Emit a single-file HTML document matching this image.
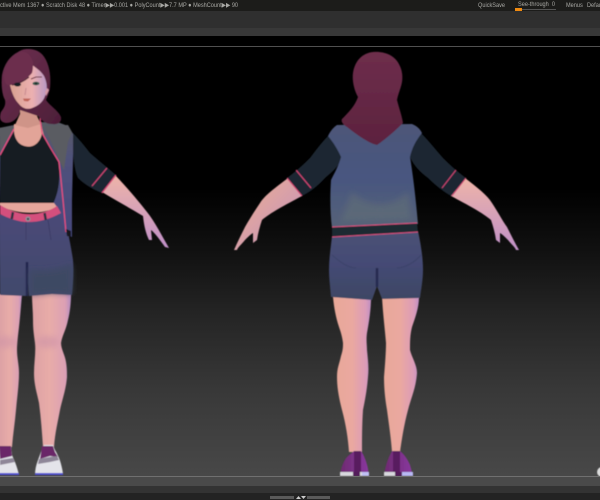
<!DOCTYPE html>
<html><head><meta charset="utf-8">
<style>
html,body{margin:0;padding:0;background:#000}
#w{position:relative;width:600px;height:500px;overflow:hidden;font-family:"Liberation Sans",sans-serif}
svg{position:absolute;left:0;top:0}
.t{position:absolute;top:2px;font-size:6.5px;line-height:8px;color:#a8a8a4;white-space:nowrap;transform-origin:0 0;transform:scaleX(.86);filter:blur(.3px)}
</style></head><body><div id="w">
<svg width="600" height="500" viewBox="0 0 600 500">
<defs>
<linearGradient id="bg" x1="0" y1="46" x2="0" y2="476" gradientUnits="userSpaceOnUse">
<stop offset="0" stop-color="#000"/><stop offset=".33" stop-color="#000"/><stop offset=".48" stop-color="#111"/><stop offset=".62" stop-color="#242424"/><stop offset=".8" stop-color="#383838"/><stop offset="1" stop-color="#484848"/></linearGradient>
<linearGradient id="skin" x1="0" y1="0" x2="1" y2="0"><stop offset="0" stop-color="#dca0a4"/><stop offset=".45" stop-color="#e8aca8"/><stop offset=".85" stop-color="#dca0b4"/><stop offset="1" stop-color="#b48cc0"/></linearGradient>
<linearGradient id="skinb" x1="0" y1="0" x2="1" y2="0"><stop offset="0" stop-color="#e8a898"/><stop offset=".5" stop-color="#eaa8a0"/><stop offset=".85" stop-color="#dc9cb8"/><stop offset="1" stop-color="#c090c4"/></linearGradient>
<linearGradient id="arm" x1="0" y1="0" x2="0" y2="1"><stop offset="0" stop-color="#eeb4a8"/><stop offset="1" stop-color="#c090c8"/></linearGradient>
<linearGradient id="armb" x1="0" y1="0" x2="1" y2="1"><stop offset="0" stop-color="#f0b090"/><stop offset="1" stop-color="#c090c0"/></linearGradient>
<linearGradient id="shorts" x1="0" y1="0" x2="0" y2="1"><stop offset="0" stop-color="#4a4a78"/><stop offset="1" stop-color="#42486c"/></linearGradient>
<linearGradient id="shortsb" x1="0" y1="0" x2="0" y2="1"><stop offset="0" stop-color="#4a5274"/><stop offset=".5" stop-color="#444a74"/><stop offset="1" stop-color="#3e4664"/></linearGradient>
<linearGradient id="jack" x1="0" y1="0" x2="0" y2="1"><stop offset="0" stop-color="#5a5c64"/><stop offset=".3" stop-color="#50527a"/><stop offset="1" stop-color="#46487e"/></linearGradient>
<linearGradient id="jackb" x1="0" y1="0" x2="0" y2="1"><stop offset="0" stop-color="#4e5678"/><stop offset=".5" stop-color="#485680"/><stop offset="1" stop-color="#566278"/></linearGradient>
<linearGradient id="sl" x1="0" y1="0" x2="1" y2="1"><stop offset="0" stop-color="#1e2632"/><stop offset="1" stop-color="#1a2630"/></linearGradient>
<linearGradient id="hair" x1="0" y1="0" x2="1" y2="1"><stop offset="0" stop-color="#6e3050"/><stop offset="1" stop-color="#4c1e38"/></linearGradient>
<linearGradient id="hairb" x1="0" y1="0" x2="0" y2="1"><stop offset="0" stop-color="#6e2e4c"/><stop offset="1" stop-color="#5c223e"/></linearGradient>
<linearGradient id="face" x1="0" y1="0" x2="1" y2="0"><stop offset="0" stop-color="#d8a090"/><stop offset=".6" stop-color="#ecb0b0"/><stop offset="1" stop-color="#b898c4"/></linearGradient>
<linearGradient id="shoe" x1="0" y1="0" x2="1" y2="0"><stop offset="0" stop-color="#6e2a70"/><stop offset="1" stop-color="#8a38a0"/></linearGradient>
<filter id="b" x="-5%" y="-5%" width="110%" height="110%"><feGaussianBlur stdDeviation=".5"/></filter>
<filter id="s" x="-40%" y="-40%" width="180%" height="180%"><feGaussianBlur stdDeviation="3"/></filter>
</defs>

<rect width="600" height="500" fill="#000"/>
<rect y="46" width="600" height="430" fill="url(#bg)"/>
<rect y="0" width="600" height="11" fill="#1c1c1a"/>
<rect y="11" width="600" height="17" fill="#2f2f2f"/>
<rect y="28" width="600" height="8" fill="#383838"/>
<rect y="46" width="600" height="1" fill="#505050"/>
<rect x="516" y="9" width="40" height="1" fill="#555"/>
<rect x="515" y="8" width="7" height="3" fill="#f08a10"/>

<g filter="url(#b)">
<!-- FRONT FIGURE -->
<path d="M-1 294H22C21 306 20 318 19 327 18 336 17 343 17 350 17 358 19 365 19 373 19 385 17 398 16 410 15 422 13 434 12 447H-1Z" fill="url(#skin)"/>
<path d="M32 294H71C71 303 70 312 68 320 66 330 62 336 61 343 61 349 65 355 66 362 67 368 67 372 67 377 66 390 62 400 60 410 58 421 55 433 54 447H43C42 433 41 418 39 403 37 393 34 385 34 373 34 363 36 352 35 343 34 335 33 330 33 320 33 312 32 303 32 294Z" fill="url(#skin)"/>
<ellipse cx="48" cy="342" rx="11" ry="6" fill="#c88ca8" opacity=".45" filter="url(#s)"/>
<ellipse cx="6" cy="342" rx="10" ry="6" fill="#c88ca8" opacity=".4" filter="url(#s)"/>
<!-- shoes -->
<path d="M42 449 44 445H53L55 450C58 455 60 460 61 464 62 468 63 472 63 475H35C35 470 36 465 38 460Z" fill="#e4e4ea"/>
<path d="M42 446H53L55 452 58 457 50 456 40 459Z" fill="#6a2668"/>
<path d="M39 459 50 457 57 456 59 460 50 462 38 464Z" fill="#8e8698"/>
<path d="M35 473H63V475H35Z" fill="#5050d0"/>
<path d="M-1 446H11L12 455 15 462C17 467 18 471 19 475H-1Z" fill="#e4e4ea"/>
<path d="M-1 446H11L12 456 0 459Z" fill="#6a2668"/>
<path d="M0 460 13 458 15 462 0 465Z" fill="#8e8698"/>
<path d="M-1 473H19V475H-1Z" fill="#5050d0"/>
<!-- shorts -->
<path d="M-1 214 20 220 40 220 62 210C66 222 70 240 73 260 74 272 73 284 72 295L52 294 29 296 27 270 26 296 0 295Z" fill="url(#shorts)"/>
<path d="M27 262V296" stroke="#24284e" stroke-width="2.500"/>
<path d="M30 270C44 272 60 270 72 264L72 294 52 293 30 295Z" fill="#3e4862" opacity=".8" filter="url(#s)"/>
<path d="M26 222V240M48 220 51 240" stroke="#3c3c68" stroke-width="1" fill="none"/>
<!-- arm -->
<path d="M115 175C125 185 140 203 147 212 155 222 162 236 169 248L165 247C160 240 155 233 151 230L152 240 149 240C146 234 144 226 143 216 130 208 115 200 102 192Z" fill="url(#arm)"/>
<!-- sleeve -->
<path d="M72 132C78 138 84 145 90 153 98 160 108 168 116 175L102 193C92 189 84 184 78 178 74 170 72 150 72 132Z" fill="url(#sl)"/>
<path d="M116 175 102 193" stroke="#d84878" stroke-width="1.300" fill="none"/>
<path d="M92 186 107 168" stroke="#d84878" stroke-width="1" fill="none"/>
<!-- jacket -->
<path d="M-1 128 14 125 40 122 60 123 68 126 73 134 73 160 72 200 72 237 66 234 56 206 0 204Z" fill="url(#jack)"/>
<path d="M44 126 68 125 72 132 68 142 64 170 59 160Z" fill="#5a5c62"/>
<path d="M-1 128 14 126 0 152Z" fill="#5a5c62"/>
<!-- chest skin -->
<path d="M14 124H41L44 136 40 148H14Z" fill="#e2a498"/>
<!-- neck -->
<path d="M20 100H36L37 116 41 124 28 128 15 125 20 114Z" fill="#cf9488"/>
<!-- tank -->
<path d="M0 156 14 131C15 141 20 146 28 146.500 36 147 41 140 42 133 48 143 55 152 59 163 60 175 60 190 53 204L30 203 0 203Z" fill="#161b21"/>
<!-- belly -->
<path d="M-1 203H54L57 207C45 214 20 216 0 206Z" fill="#e6a69c"/>
<!-- piping -->
<path d="M0 155 14 129" stroke="#e84f80" stroke-width="1.300" fill="none"/>
<path d="M40 118 42 133 50 147 59 162 61 180 63 200 66 232" stroke="#e84f80" stroke-width="1.200" fill="none"/>
<path d="M66 229 71 231 71 237 67 236Z" fill="#14181e"/>
<!-- belt -->
<path d="M0 205C10 211 20 214 30 214 40 214 50 211 57 206L61 213C50 219 40 222 28 222 18 222 8 218 0 214Z" fill="#d44f7d"/>
<rect x="11" y="212" width="2.500" height="7" fill="#2a3040" transform="rotate(10 12 216)"/>
<rect x="44" y="213" width="2.500" height="7" fill="#2a3040" transform="rotate(-10 45 217)"/>
<circle cx="28" cy="219" r="2.500" fill="#8a8f98"/>
<circle cx="28" cy="219" r="1" fill="#2a2a30"/>
<!-- hair back -->
<path d="M28 49C36 49 42 52 46 60 50 68 51 78 50 88 49 94 47 97 46 100 50 106 58 110 61 117 62 122 58 125 52 124 46 124 42 121 38 116L20 110C20 116 14 123 6 123 0 122-1 118 1 112 4 108 6 105 5 100 2 95 1 85 2 75 4 64 10 56 18 52 21 50 24 49 28 49Z" fill="url(#hair)"/>
<!-- face -->
<path d="M31 64C36 68 41 71 44 76 47 82 48 90 45 96 43 102 38 106 32 108 27 110 22 108 19 104 15 100 12 94 10 85 20 84 28 76 31 64Z" fill="url(#face)"/>
<!-- fringe -->
<path d="M33 62C30 53 25 50 18 53 10 58 4 68 4 78 5 84 7 86 10 85 18 84 27 79 32 73 33 70 33 66 33 62Z" fill="#6c2e4e"/>
<path d="M12 85C18 84 24 81 29 77" stroke="#4a1e34" stroke-width="1.200" fill="none"/>
<!-- face detail -->
<ellipse cx="17.500" cy="84.500" rx="3.500" ry="2" fill="#181e22"/>
<ellipse cx="36" cy="83.500" rx="3.500" ry="1.800" fill="#3a5a4e"/>
<circle cx="36" cy="83.500" r="1.100" fill="#1c2624"/>
<path d="M31 79 36 77 42 77" stroke="#6a3040" stroke-width="1" fill="none"/>
<path d="M26 88 25 95" stroke="#c78a90" stroke-width="1" fill="none"/>
<path d="M23 98.500H31L28 101.500 24 101Z" fill="#c0665c"/>
<path d="M45 92 47 88 49 90 46 96Z" fill="#d49aa8"/>

<!-- BACK FIGURE -->
<path d="M333 297H371C371 310 369 322 367 333 366 340 367 345 367 350 368 360 369 368 368 377 367 390 365 400 363 410 362 425 362 438 362 452H349C348 438 346 425 342 410 339 398 337 388 337 377 337 368 339 365 341 356 343 350 343 347 343 343 342 335 340 330 339 327 336 318 334 308 333 297Z" fill="url(#skinb)"/>
<path d="M382 297H419C419 308 415 318 412 327 410 335 410 342 410 350 412 358 417 365 417 373 416 388 411 398 408 410 404 425 402 438 400 452H392C391 438 389 425 387 410 385 398 384 388 384 377 385 365 386 352 386 343 385 330 383 315 382 297Z" fill="url(#skinb)"/>
<!-- shoes -->
<path d="M354 451H361C364 455 367 463 368 469L369 476H340C341 468 343 462 347 457 349 455 352 453 354 451Z" fill="url(#shoe)"/>
<rect x="354" y="451" width="7" height="22" fill="#581f5e"/>
<rect x="340" y="472" width="29" height="4" fill="#d8d8de"/>
<rect x="353" y="472" width="7" height="4" fill="#521c5a"/>
<rect x="362" y="472" width="7" height="4" fill="#c0c0f4"/>
<path d="M392 451H400C404 454 408 460 410 465L413 476H384C385 468 387 460 392 451Z" fill="url(#shoe)"/>
<rect x="393" y="451" width="7" height="22" fill="#581f5e"/>
<rect x="384" y="472" width="29" height="4" fill="#d8d8de"/>
<rect x="395" y="472" width="7" height="4" fill="#521c5a"/>
<rect x="402" y="472" width="11" height="4" fill="#b8b8f4"/>
<!-- shorts -->
<path d="M332 236 418 231C421 245 423 258 423 270 423 280 421 290 420 298L382 299 377 286 372 300 331 297C330 285 329 278 329 270 329 258 331 246 332 236Z" fill="url(#shortsb)"/>
<path d="M377 268V287" stroke="#262b50" stroke-width="2.500"/>
<path d="M332 255C340 262 348 268 356 268M421 255C415 262 405 268 397 268" stroke="#3a4068" stroke-width=".8" fill="none"/>
<!-- arms -->
<path d="M288 178C275 188 265 195 260 203 254 212 249 220 245 227 241 235 237 243 234 250L237 250C238 247 241 245 245 240 248 237 251 234 253 233L253 243 257 240C258 233 260 226 262 220 270 213 285 205 302 196Z" fill="url(#armb)"/>
<path d="M465 178C478 188 487 195 492 203 498 212 502 220 507 227 511 235 515 243 519 250L516 250C515 247 512 245 508 240 505 237 502 234 500 233L500 243 496 240C495 233 493 226 491 220 483 213 468 205 451 196Z" fill="url(#arm)"/>
<!-- sleeves -->
<path d="M328 136C333 142 338 150 341 157 340 166 332 172 325 178 318 186 310 192 302 196L287 178C295 172 302 166 310 158 316 150 322 142 328 136Z" fill="url(#sl)"/>
<path d="M421 133C416 140 412 148 410 157 414 166 420 172 428 178 436 186 444 192 451 196L466 178C458 172 451 166 443 158 436 150 428 140 421 133Z" fill="url(#sl)"/>
<path d="M287 178 302 196M296 170 311 188M466 178 452 196M456 170 442 188" stroke="#d84878" stroke-width="1" fill="none"/>
<!-- jacket -->
<path d="M328 136C331 130 334 127 337 125L412 124C417 126 420 129 422 133 416 140 412 148 410 157 413 175 416 200 418 224L332 228C330 212 330 195 331 180 335 172 339 165 341 157 338 150 333 142 328 136Z" fill="url(#jackb)"/>
<path d="M352 192C368 208 392 208 408 192L412 220 340 222Z" fill="#5e6c78" opacity=".7" filter="url(#s)"/>
<!-- belt -->
<path d="M332 227 417 223 418 232 332 237Z" fill="#1c2a30"/>
<path d="M332 227 417 223M332 237 418 232" stroke="#d8507e" stroke-width="1" fill="none"/>
<!-- hair -->
<path d="M373 52C382 51 392 54 397 61 402 68 403 75 402 82 401 88 398 94 397 100 399 108 402 116 403 123 396 130 386 139 377 145 368 143 356 134 347 127 342 124 341 121 342 119 348 113 355 106 358 97 354 90 352 80 353 73 355 60 363 53 373 52Z" fill="url(#hairb)"/>
</g>

<circle cx="602" cy="472" r="5" fill="#dcdcdc" filter="url(#b)"/>

<!-- bottom bars -->
<rect y="476" width="600" height="1" fill="#707070"/>
<rect y="477" width="600" height="9" fill="#4a4a4a"/>
<rect y="486" width="600" height="7" fill="#333"/>
<rect y="493" width="600" height="7" fill="#232323"/>
<rect x="270" y="496" width="24" height="3" fill="#5a5a5a"/>
<rect x="307" y="496" width="23" height="3" fill="#5a5a5a"/>
<path d="M296 499 298.500 496 301 499ZM301 496H306L303.500 499Z" fill="#ccc"/>
</svg>
<div class="t" style="left:0">ctive Mem 1367 ● Scratch Disk 48 ● Timer▶▶0.001 ● PolyCount▶▶7.7 MP ● MeshCount▶▶ 90</div>
<div class="t" style="left:478px">QuickSave</div>
<div class="t" style="left:518px;top:1px">See-through&nbsp; 0</div>
<div class="t" style="left:566px">Menus</div>
<div class="t" style="left:587px">Default</div>
</div></body></html>
